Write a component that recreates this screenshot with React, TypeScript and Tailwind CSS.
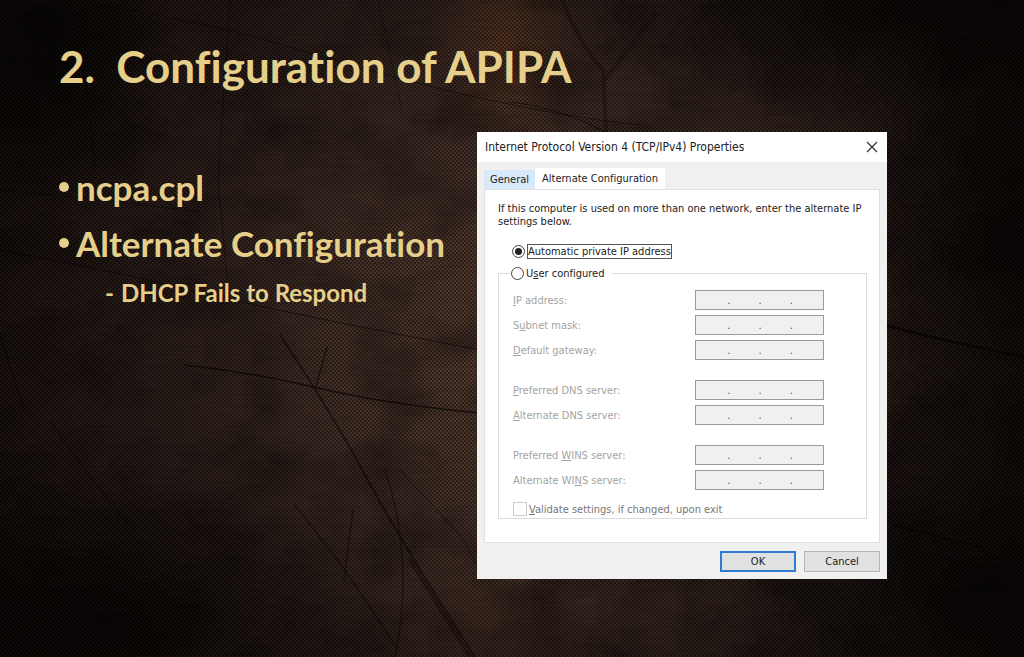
import { useState } from "react";
import type { ReactNode } from "react";

type AddressField = {
  id: string;
  before: string;
  key: string;
  after: string;
};

// the access key letter of each label is underlined
const GROUPS: AddressField[][] = [
  [
    { id: "ip", before: "", key: "I", after: "P address:" },
    { id: "subnet", before: "S", key: "u", after: "bnet mask:" },
    { id: "gateway", before: "", key: "D", after: "efault gateway:" },
  ],
  [
    { id: "dns1", before: "", key: "P", after: "referred DNS server:" },
    { id: "dns2", before: "", key: "A", after: "lternate DNS server:" },
  ],
  [
    { id: "wins1", before: "Preferred ", key: "W", after: "INS server:" },
    { id: "wins2", before: "Alternate WI", key: "N", after: "S server:" },
  ],
];

const CRACKS = [
  { d: "M185 365 Q250 372 318 388 T480 413", w: 1.5, o: 0.7 },
  { d: "M280 335 Q330 410 365 475 T475 657", w: 2, o: 0.55 },
  { d: "M327 347 L316 386", w: 1.5, o: 0.55 },
  { d: "M385 470 Q415 560 395 657", w: 1.5, o: 0.45 },
  { d: "M295 505 L345 570 L395 645", w: 1.5, o: 0.5 },
  { d: "M353 510 L344 580", w: 1.5, o: 0.5 },
  { d: "M400 470 L460 535 L480 570", w: 1, o: 0.5 },
  { d: "M0 250 Q110 270 190 290 T480 350", w: 1, o: 0.6 },
  { d: "M100 5 Q210 22 300 50 T480 98 T640 125", w: 1, o: 0.5 },
  { d: "M70 0 L88 100 L95 170", w: 1, o: 0.5 },
  { d: "M230 0 L218 180 L228 290", w: 1, o: 0.5 },
  { d: "M378 0 L402 110", w: 1, o: 0.4 },
  { d: "M562 0 Q580 45 603 70 L606 132", w: 4, o: 0.3 },
  { d: "M655 15 L606 78", w: 5, o: 0.25 },
  { d: "M512 102 Q560 108 606 132", w: 1, o: 0.6 },
  { d: "M50 420 Q90 480 130 525", w: 1.5, o: 0.4 },
  { d: "M0 335 L24 410", w: 2, o: 0.5 },
  { d: "M410 560 L470 657", w: 4, o: 0.35 },
  { d: "M0 190 Q90 198 200 212", w: 1, o: 0.5 },
  { d: "M888 326 Q940 340 1024 357", w: 2.5, o: 0.8 },
  { d: "M895 525 Q930 535 985 548", w: 2, o: 0.6 },
];

function Backdrop() {
  return (
    <svg
      aria-hidden="true"
      viewBox="0 0 1024 657"
      preserveAspectRatio="none"
      className="absolute inset-0 h-full w-full"
    >
      <defs>
        <radialGradient id="warm" gradientUnits="userSpaceOnUse" cx="530" cy="340" r="600">
          <stop offset="0" stopColor="#543b2e" />
          <stop offset="0.3" stopColor="#432f26" />
          <stop offset="0.6" stopColor="#2a1d19" />
          <stop offset="0.85" stopColor="#1b1210" />
          <stop offset="1" stopColor="#0f0a09" />
        </radialGradient>
        <radialGradient id="ember">
          <stop offset="0" stopColor="#6b3c20" stopOpacity="0.5" />
          <stop offset="1" stopColor="#6b3c20" stopOpacity="0" />
        </radialGradient>
        <radialGradient id="shade">
          <stop offset="0" stopColor="#000" stopOpacity="0.7" />
          <stop offset="1" stopColor="#000" stopOpacity="0" />
        </radialGradient>
        <pattern id="weave" width="4" height="4" patternUnits="userSpaceOnUse">
          <path d="M0 0h2v2h-2zM2 2h2v2h-2z" fill="#000" fillOpacity="0.38" />
          <path d="M2 0h1v1h-1zM0 2h1v1h-1z" fill="#b0a090" fillOpacity="0.12" />
        </pattern>
        <filter id="stains" x="0" y="0" width="100%" height="100%">
          <feTurbulence type="fractalNoise" baseFrequency="0.014 0.018" numOctaves="4" seed="8" />
          <feColorMatrix values="0 0 0 0 0  0 0 0 0 0  0 0 0 0 0  2 0 0 0 -0.8" />
        </filter>
        <filter id="threads" x="0" y="0" width="100%" height="100%">
          <feTurbulence type="fractalNoise" baseFrequency="0.03 0.35" numOctaves="2" seed="3" />
          <feColorMatrix values="0 0 0 0 0  0 0 0 0 0  0 0 0 0 0  1.6 0 0 0 -0.6" />
        </filter>
      </defs>
      <rect width="1024" height="657" fill="url(#warm)" />
      <ellipse cx="505" cy="45" rx="75" ry="110" fill="url(#ember)" />
      <ellipse cx="500" cy="620" rx="150" ry="80" fill="url(#ember)" opacity="0.3" />
      <ellipse cx="50" cy="70" rx="130" ry="160" fill="url(#shade)" />
      <ellipse cx="110" cy="610" rx="280" ry="150" fill="url(#shade)" />
      <ellipse cx="900" cy="10" rx="350" ry="110" fill="url(#shade)" />
      <ellipse cx="980" cy="590" rx="280" ry="240" fill="url(#shade)" />
      <ellipse cx="1010" cy="230" rx="180" ry="300" fill="url(#shade)" />
      <rect width="1024" height="657" filter="url(#stains)" opacity="0.4" />
      <rect width="1024" height="657" filter="url(#threads)" opacity="0.14" />
      <rect width="1024" height="657" fill="url(#weave)" />
      <g fill="none" stroke="#070403" strokeLinecap="round">
        {CRACKS.map((c) => (
          <path key={c.d} d={c.d} strokeWidth={c.w} strokeOpacity={c.o} />
        ))}
      </g>
    </svg>
  );
}

function Radio({ checked, onChange, children }: { checked: boolean; onChange: () => void; children: ReactNode }) {
  return (
    <label className="flex items-center gap-0.5">
      <input
        type="radio"
        name="mode"
        checked={checked}
        onChange={onChange}
        className="h-[13px] w-[13px] appearance-none rounded-full border border-[#444] bg-white bg-clip-content p-[2px] checked:bg-[#222]"
      />
      {children}
    </label>
  );
}

function AddressRow({ field }: { field: AddressField }) {
  return (
    <div className="flex items-center justify-between">
      <label htmlFor={field.id}>
        {field.before}
        <span className="underline">{field.key}</span>
        {field.after}
      </label>
      <div className="flex h-5 w-[129px] items-center border border-[#9a9a9a] bg-[#f0f0f0] pl-0.5">
        {[0, 1, 2, 3].map((n) => (
          <div key={n} className="flex flex-1 items-center">
            <input
              id={n === 0 ? field.id : undefined}
              aria-label={n === 0 ? undefined : `Octet ${n + 1}`}
              disabled
              className="w-full min-w-0 flex-1 text-center"
            />
            {n < 3 ? <span className="w-0.5 text-[#555]">.</span> : null}
          </div>
        ))}
      </div>
    </div>
  );
}

function Bullet() {
  return <span className="h-2.5 w-2.5 shrink-0 rounded-full bg-[#e6cf8b]" />;
}

function PropertiesDialog() {
  const [mode, setMode] = useState("auto");

  return (
    <section
      aria-label="Internet Protocol Version 4 (TCP/IPv4) Properties"
      className="w-[410px] shrink-0 bg-[#f0f0f0] font-['DejaVu_Sans_Condensed','DejaVu_Sans',sans-serif] text-[11px] leading-[13px] text-[#222]"
    >
      <header className="flex h-[30px] items-center justify-between bg-white pr-[9px] pl-2">
        <h2 className="text-xs">Internet Protocol Version 4 (TCP/IPv4) Properties</h2>
        <button type="button" aria-label="Close">
          <svg viewBox="0 0 12 12" className="h-3 w-3" fill="none" stroke="#333" strokeWidth="1.2">
            <path d="M1 1l10 10M11 1L1 11" />
          </svg>
        </button>
      </header>

      <div className="px-[7px] pt-1.5">
        <div role="tablist" className="flex items-end">
          <button type="button" role="tab" aria-selected="false" className="h-[19px] bg-[#d8eaf9] px-1.5">
            General
          </button>
          <button type="button" role="tab" aria-selected="true" className="h-[21px] bg-white px-[7px]">
            Alternate Configuration
          </button>
        </div>

        <div className="border border-[#e0e0e0] bg-white pt-3 pr-3 pb-[23px] pl-[13px]">
          <p>If this computer is used on more than one network, enter the alternate IP settings below.</p>

          <div className="mt-4 ml-3.5">
            <Radio checked={mode === "auto"} onChange={() => setMode("auto")}>
              <span className="border border-[#555]">Automatic private IP address</span>
            </Radio>
          </div>

          <fieldset className="mt-2 border border-[#dcdcdc] px-3.5 pb-0.5">
            <legend className="-ml-0.5 pr-2">
              <Radio checked={mode === "user"} onChange={() => setMode("user")}>
                <span>
                  U<span className="underline">s</span>er configured
                </span>
              </Radio>
            </legend>

            <div className="mt-2.5 mr-7 flex flex-col gap-5 text-[#a3a3a3]">
              {GROUPS.map((group) => (
                <div key={group[0].id} className="flex flex-col gap-[5px]">
                  {group.map((f) => (
                    <AddressRow key={f.id} field={f} />
                  ))}
                </div>
              ))}
            </div>

            <label className="mt-3 flex items-center gap-0.5 text-[#777]">
              <input type="checkbox" disabled className="h-3.5 w-3.5 appearance-none border border-[#ccc] bg-white" />
              <span>
                <span className="underline">V</span>alidate settings, if changed, upon exit
              </span>
            </label>
          </fieldset>
        </div>
      </div>

      <footer className="flex justify-end gap-2 px-[7px] pt-2 pb-[7px]">
        <button type="button" className="h-[21px] w-[76px] border-2 border-[#2f7bd0] bg-[#e1e1e1]">
          OK
        </button>
        <button type="button" className="h-[21px] w-[76px] border border-[#b4b4b4] bg-[#e1e1e1]">
          Cancel
        </button>
      </footer>
    </section>
  );
}

export default function App() {
  return (
    <main className="relative min-h-screen overflow-hidden bg-[#0e0908] font-['Lato',sans-serif] font-bold text-[#e6cf8b] [font-variant-ligatures:none]">
      <Backdrop />
      <div className="relative pt-[38px] pr-[137px] pl-[59px]">
        <h1 className="text-[44px] leading-[56px] whitespace-pre">2.  Configuration of APIPA</h1>
        <div className="mt-[38px] flex items-start justify-between">
          <ul className="pt-[35px] text-[35px] leading-[40px] whitespace-nowrap">
            <li className="flex items-center gap-[7px]">
              <Bullet />
              ncpa.cpl
            </li>
            <li className="mt-4">
              <div className="flex items-center gap-[7px]">
                <Bullet />
                Alternate Configuration
              </div>
              <ul className="mt-3 ml-[46px] text-2xl leading-[36px]">
                <li className="flex gap-[7px]">
                  <span>-</span>DHCP Fails to Respond
                </li>
              </ul>
            </li>
          </ul>
          <div className="font-normal">
            <PropertiesDialog />
          </div>
        </div>
      </div>
    </main>
  );
}
